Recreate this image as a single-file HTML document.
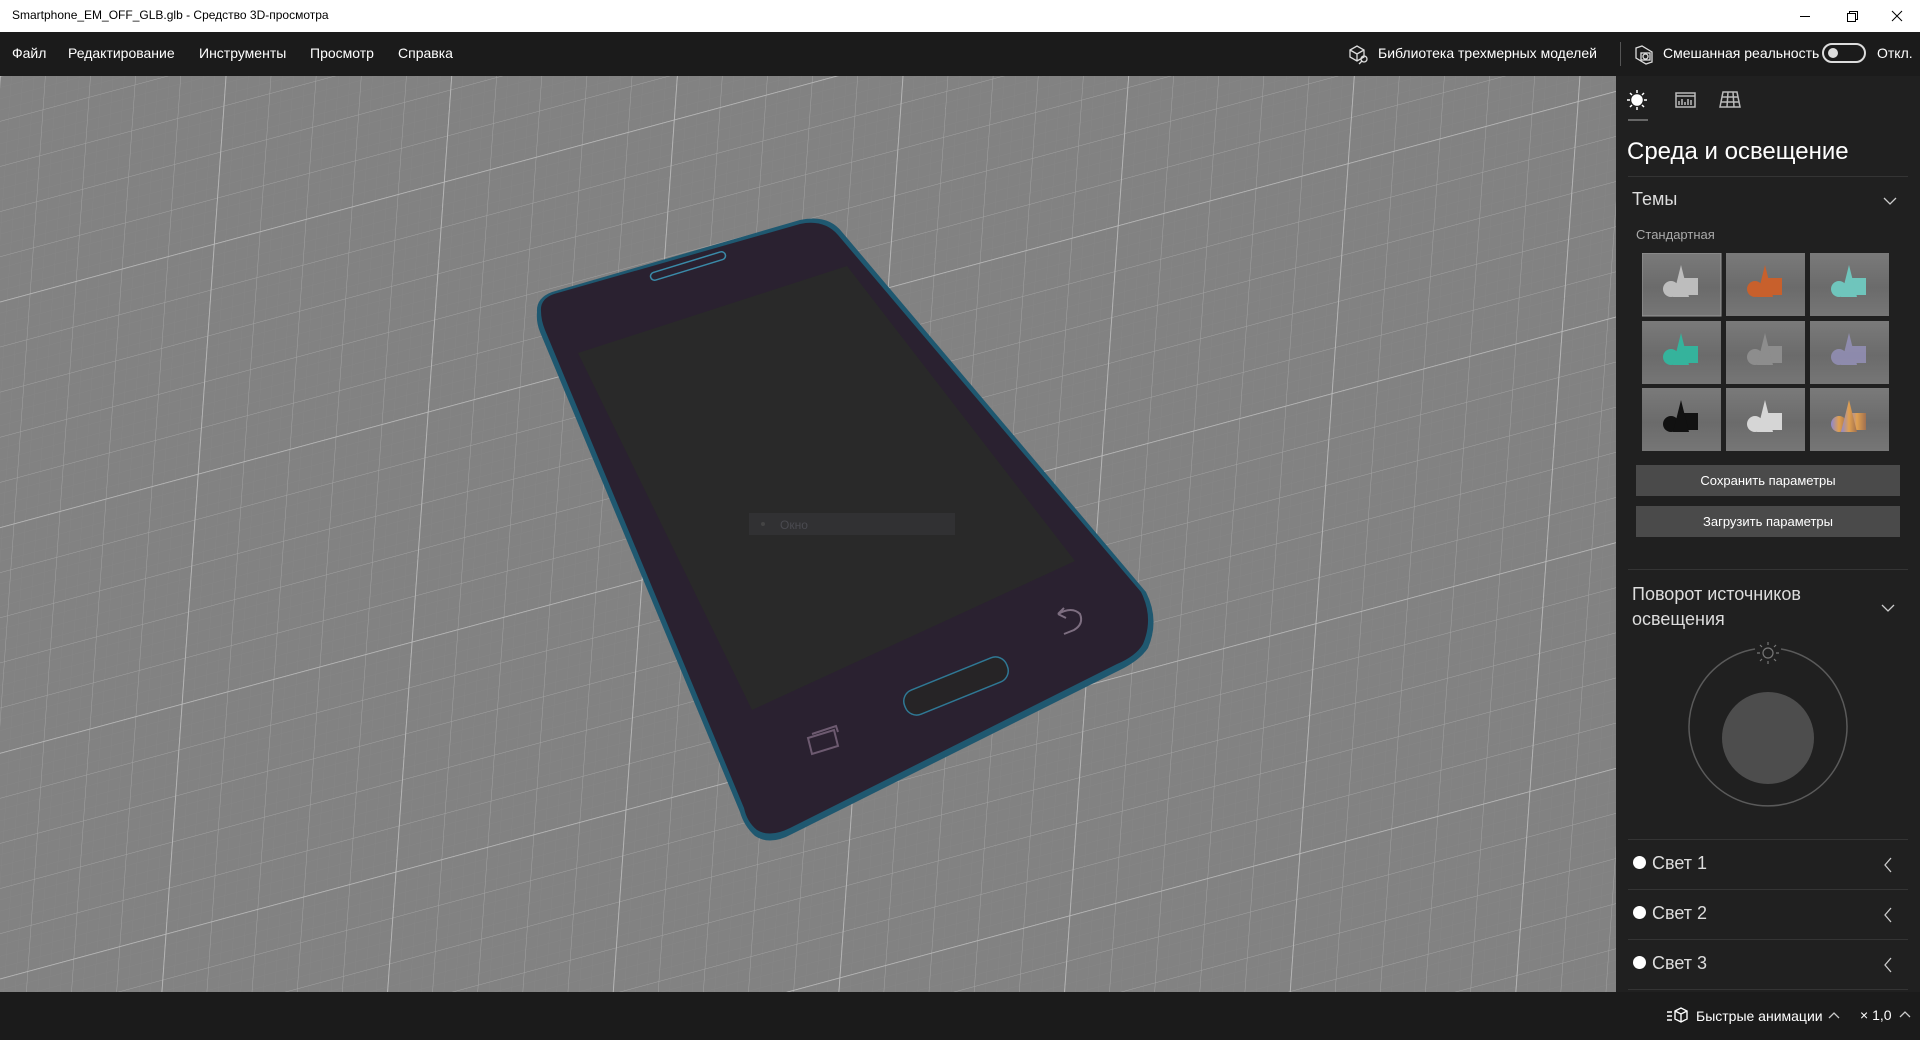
<!DOCTYPE html>
<html><head><meta charset="utf-8"><style>
*{margin:0;padding:0;box-sizing:border-box}
body{width:1920px;height:1040px;overflow:hidden;background:#1f1f1f;font-family:"Liberation Sans","DejaVu Sans",sans-serif;position:relative;color:#fff}
.abs{position:absolute;white-space:nowrap}
#title{position:absolute;left:0;top:0;width:1920px;height:32px;background:#fff;color:#000}
#menu{position:absolute;left:0;top:32px;width:1920px;height:44px;background:#1b1b1b}
#view{position:absolute;left:0;top:76px;width:1616px;height:916px;background:#808080;overflow:hidden}
#panel{position:absolute;left:1616px;top:76px;width:304px;height:916px;background:#202020}
#bottom{position:absolute;left:0;top:992px;width:1920px;height:48px;background:#1b1b1b}
.m{font-size:14px;top:13px;color:#fff}
.sep{position:absolute;left:12px;width:280px;height:1px;background:#343434}
.btn{position:absolute;left:20px;width:264px;height:31px;background:#4a4a4a;font-size:13px;text-align:center;line-height:31px}
.dot{position:absolute;left:17px;width:13px;height:13px;border-radius:50%;background:#fff}
.lt{position:absolute;left:36px;font-size:18px;color:#ddd}
</style></head><body>
<div id="title">
 <div class="abs" style="left:12px;top:8px;font-size:12px">Smartphone_EM_OFF_GLB.glb - Средство 3D-просмотра</div>
 <svg class="abs" style="left:1795px;top:8px" width="120" height="16" stroke="#000" fill="none" stroke-width="1">
  <line x1="5" y1="8.5" x2="15" y2="8.5"/>
  <rect x="52.5" y="5.5" width="8" height="8"/><path d="M54.5 5.5V3.5H62.5V11.5H60.5"/>
  <path d="M97 3L107 13M107 3L97 13"/>
 </svg>
</div>
<div id="menu">
 <div class="abs m" style="left:12px">Файл</div>
 <div class="abs m" style="left:68px">Редактирование</div>
 <div class="abs m" style="left:199px">Инструменты</div>
 <div class="abs m" style="left:310px">Просмотр</div>
 <div class="abs m" style="left:398px">Справка</div>
 <svg class="abs" style="left:1348px;top:12px" width="22" height="22" fill="none" stroke="#ddd" stroke-width="1.3">
  <path d="M2 6L9 2L16 6V13L9 17L2 13Z M2 6L9 10L16 6 M9 10V17"/><circle cx="16" cy="15" r="3"/><path d="M14 17L11 20"/>
 </svg>
 <div class="abs m" style="left:1378px">Библиотека трехмерных моделей</div>
 <div class="abs" style="left:1620px;top:10px;width:1px;height:24px;background:#555"></div>
 <svg class="abs" style="left:1634px;top:12px" width="22" height="22" fill="none" stroke="#ddd" stroke-width="1.3">
  <path d="M2 4L8 2L18 8V18L12 20L2 14Z"/><rect x="7" y="9" width="9" height="7"/><circle cx="11.5" cy="12.5" r="2.5"/>
 </svg>
 <div class="abs m" style="left:1663px">Смешанная реальность</div>
 <div class="abs" style="left:1822px;top:11px;width:44px;height:20px;border:2px solid #ddd;border-radius:10px"></div>
 <div class="abs" style="left:1828px;top:16px;width:10px;height:10px;border-radius:50%;background:#ddd"></div>
 <div class="abs m" style="left:1877px">Откл.</div>
</div>
<div id="view">
<svg width="1616" height="916">
 <defs>
  <pattern id="g1" width="11.5" height="11.5" patternUnits="userSpaceOnUse" patternTransform="matrix(1 -0.27 -0.07 1 0 0)">
   <path d="M0 0H11.5M0 0V11.5" stroke="#878787" stroke-width="0.6" fill="none"/>
  </pattern>
  <pattern id="g2" width="46" height="46" patternUnits="userSpaceOnUse" patternTransform="matrix(1 -0.27 -0.07 1 0 0)">
   <path d="M0 0H46M0 0V46" stroke="#a2a2a2" stroke-width="1" fill="none"/>
  </pattern>
  <pattern id="g3" width="230" height="230" patternUnits="userSpaceOnUse" patternTransform="matrix(1 -0.27 -0.07 1 0 0)">
   <path d="M0 0H230M0 0V230" stroke="#bdbdbd" stroke-width="1.6" fill="none"/>
  </pattern>
 </defs>
 <rect width="1616" height="916" fill="#828282"/>
 <rect width="1616" height="916" fill="url(#g1)"/>
 <rect width="1616" height="916" fill="url(#g2)"/>
 <rect width="1616" height="916" fill="url(#g3)"/>
 <g transform="translate(0,-76)">
  <path d="M537 312 Q536 298 552 292 L800 220 Q828 214 842 232 L1146 592 Q1160 620 1148 648 Q1140 660 1120 670 L792 834 Q770 846 755 836 Q744 826 740 812 L540 332 Q536 322 537 312Z" fill="#1f5870"/>
  <path d="M541 311 Q540 299 554 294 L800 224 Q824 219 838 235 L1141 592 Q1154 618 1143 644 Q1136 656 1117 664 L790 828 Q770 838 757 830 Q747 822 744 808 L545 330 Q541 320 541 311Z" fill="#2a2130"/>
  <path d="M578 353 L847 266 L1075 561 L752 710Z" fill="#292929"/>
  <rect x="649" y="262" width="78" height="8" rx="4" transform="rotate(-17 688 266)" fill="#2a2130" stroke="#3a8aa8" stroke-width="1.5"/>
  <rect x="901" y="673" width="110" height="26" rx="12" transform="rotate(-22 956 686)" fill="#262426" stroke="#2f7894" stroke-width="1.5"/>
  <rect x="749" y="513" width="206" height="22" fill="#343438" opacity="0.7"/>
  <circle cx="763" cy="524" r="2" fill="#444"/>
  <text x="780" y="529" font-size="12" fill="#4a4a50">Окно</text>
  <path d="M808 738 L834 730 L838 746 L812 754Z M812 734 L836 726 L838 732" fill="none" stroke="#6d5a70" stroke-width="2"/>
  <path d="M1058 614 Q1072 606 1080 614 Q1084 624 1074 630 L1064 634 M1058 614 L1064 608 M1058 614 L1066 618" fill="none" stroke="#7d6e80" stroke-width="2"/>
 </g>
</svg>
</div>
<div id="panel">
 <svg class="abs" style="left:10px;top:12px" width="130" height="26" fill="none" stroke="#fff" stroke-width="1.5">
  <circle cx="11" cy="12" r="5" fill="#fff"/>
  <path d="M11 2V5M11 19V22M1 12H4M18 12H21M4 5L6 7M16 17L18 19M4 19L6 17M16 7L18 5"/>
  <g stroke="#bbb"><rect x="50" y="5" width="19" height="14"/><path d="M50 8H69M53 17V13M56 17V11M59 17V14M62 17V11M65 17V12"/></g>
  <g stroke="#bbb"><path d="M97 4H111L114 19H94Z M96 9H112 M95 14H113 M102 4L101 19 M107 4L108 19"/></g>
 </svg>
 <div class="abs" style="left:12px;top:43px;width:20px;height:2px;background:#666"></div>
 <div class="abs" style="left:11px;top:62px;font-size:24px;color:#fff">Среда и освещение</div>
 <div class="sep" style="top:100px"></div>
 <div class="abs" style="left:16px;top:113px;font-size:18px;color:#ddd">Темы</div>
 <svg class="abs" style="left:266px;top:117px" width="16" height="16" fill="none" stroke="#ccc" stroke-width="1.3"><path d="M2 5L8 11L14 5"/></svg>
 <div class="abs" style="left:20px;top:151px;font-size:13px;color:#aaa">Стандартная</div>
 <svg class="abs" style="left:26px;top:177px" width="248" height="200">
  <defs>
   <linearGradient id="tb" x1="0" y1="0" x2="0" y2="1"><stop offset="0" stop-color="#7a7a7a"/><stop offset="0.55" stop-color="#6b6b6b"/><stop offset="1" stop-color="#767676"/></linearGradient>
   <linearGradient id="mx" x1="0" x2="1"><stop offset="0" stop-color="#8c88d0"/><stop offset="0.5" stop-color="#e0a050"/><stop offset="1" stop-color="#a07050"/></linearGradient>
   <g id="obj"><circle cx="29" cy="36" r="8"/><rect x="38" y="25" width="18" height="17"/><path d="M39 12L47 44H31Z"/></g>
  </defs>
  <g>
   <rect x="0" y="0" width="79" height="63" fill="url(#tb)" stroke="#999"/><use href="#obj" fill="#bdbdbd"/>
   <rect x="84" y="0" width="79" height="63" fill="url(#tb)"/><use href="#obj" x="84" fill="#c8602c"/>
   <rect x="168" y="0" width="79" height="63" fill="url(#tb)"/><use href="#obj" x="168" fill="#6fc5bc"/>
   <rect x="0" y="68" width="79" height="63" fill="url(#tb)"/><use href="#obj" y="68" fill="#35b39c"/>
   <rect x="84" y="68" width="79" height="63" fill="url(#tb)"/><use href="#obj" x="84" y="68" fill="#8d8d8d"/>
   <rect x="168" y="68" width="79" height="63" fill="url(#tb)"/><use href="#obj" x="168" y="68" fill="#9c98c8" opacity="0.7"/>
   <rect x="0" y="135" width="79" height="63" fill="url(#tb)"/><use href="#obj" y="135" fill="#111"/>
   <rect x="84" y="135" width="79" height="63" fill="url(#tb)"/><use href="#obj" x="84" y="135" fill="#d6d6d6"/>
   <rect x="168" y="135" width="79" height="63" fill="url(#tb)"/><use href="#obj" x="168" y="135" fill="url(#mx)"/>
  </g>
 </svg>
 <div class="btn" style="top:389px">Сохранить параметры</div>
 <div class="btn" style="top:430px">Загрузить параметры</div>
 <div class="sep" style="top:493px"></div>
 <div class="abs" style="left:16px;top:506px;font-size:18px;color:#ddd;line-height:25px">Поворот источников<br>освещения</div>
 <svg class="abs" style="left:264px;top:524px" width="16" height="16" fill="none" stroke="#ccc" stroke-width="1.3"><path d="M2 5L8 11L14 5"/></svg>
 <svg class="abs" style="left:60px;top:541px" width="184" height="200">
  <path d="M79 27 A79 79 0 1 0 105 27" fill="none" stroke="#5a5a5a" stroke-width="1.5" transform="translate(0,5)"/>
  <circle cx="92" cy="121" r="46" fill="#4d4d4d"/>
  <g stroke="#777" stroke-width="1.2" fill="none"><circle cx="92" cy="36" r="5"/><path d="M92 25V28M92 44V47M81 36H84M100 36H103M84 28L86 30M98 42L100 44M84 44L86 42M98 30L100 28"/></g>
 </svg>
 <div class="sep" style="top:763px"></div>
 <div class="dot" style="top:780px"></div><div class="lt" style="top:777px">Свет 1</div>
 <svg class="abs" style="left:266px;top:780px" width="12" height="18" fill="none" stroke="#ccc" stroke-width="1.3"><path d="M9 2L3 9L9 16"/></svg>
 <div class="sep" style="top:813px"></div>
 <div class="dot" style="top:830px"></div><div class="lt" style="top:827px">Свет 2</div>
 <svg class="abs" style="left:266px;top:830px" width="12" height="18" fill="none" stroke="#ccc" stroke-width="1.3"><path d="M9 2L3 9L9 16"/></svg>
 <div class="sep" style="top:863px"></div>
 <div class="dot" style="top:880px"></div><div class="lt" style="top:877px">Свет 3</div>
 <svg class="abs" style="left:266px;top:880px" width="12" height="18" fill="none" stroke="#ccc" stroke-width="1.3"><path d="M9 2L3 9L9 16"/></svg>
 <div class="sep" style="top:913px"></div>
</div>
<div id="bottom">
 <svg class="abs" style="left:1666px;top:15px" width="24" height="18" fill="none" stroke="#fff" stroke-width="1.4">
  <path d="M1 5H6M1 9H6M1 13H6"/><path d="M9 4L15 1L21 4V12L15 15L9 12Z M9 4L15 7L21 4 M15 7V15"/>
 </svg>
 <div class="abs" style="left:1696px;top:16px;font-size:14px">Быстрые анимации</div>
 <svg class="abs" style="left:1827px;top:16px" width="14" height="14" fill="none" stroke="#ccc" stroke-width="1.3"><path d="M2 10L7 5L12 10"/></svg>
 <div class="abs" style="left:1860px;top:15px;font-size:14px">× 1,0</div>
 <svg class="abs" style="left:1898px;top:15px" width="14" height="14" fill="none" stroke="#ccc" stroke-width="1.3"><path d="M2 10L7 5L12 10"/></svg>
</div>
</body></html>
